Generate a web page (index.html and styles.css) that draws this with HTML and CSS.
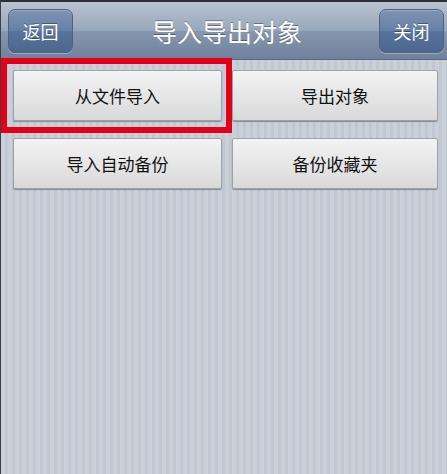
FILE: index.html
```html
<!DOCTYPE html>
<html lang="zh">
<head>
<meta charset="utf-8">
<link rel="stylesheet" href="styles.css">
</head>
<body>
<div class="screen">
  <header class="navbar">
    <button class="nav-btn">返回</button>
    <h1 class="title">导入导出对象</h1>
    <button class="nav-btn">关闭</button>
  </header>
  <main class="grid">
    <div class="cell highlighted"><button class="action">从文件导入</button></div>
    <div class="cell"><button class="action">导出对象</button></div>
    <div class="cell"><button class="action">导入自动备份</button></div>
    <div class="cell"><button class="action">备份收藏夹</button></div>
  </main>
</div>
</body>
</html>
```
FILE: styles.css
```css
html, body {
  margin: 0;
  padding: 0;
  width: 447px;
  height: 474px;
  overflow: hidden;
}
body {
  font-family: "Noto Sans CJK SC", "Noto Sans", sans-serif;
}
.screen {
  width: 447px;
  height: 474px;
  box-sizing: border-box;
  border-left: 1px solid #3c3f44;
  background: repeating-linear-gradient(90deg, #c9d0d8 0 4px, #c1c8d1 4px 7px);
  display: flex;
  flex-direction: column;
}
.navbar {
  height: 60px;
  flex: none;
  box-sizing: border-box;
  border-top: 2px solid #2d3036;
  border-bottom: 1px solid #5a6a82;
  background: linear-gradient(#b9c3d0 0%, #98a7bb 50%, #8797ae 51%, #6f819c 100%);
  display: flex;
  align-items: center;
  justify-content: space-between;
  padding: 0 3px 0 7px;
}
.nav-btn {
  width: 65px;
  height: 44px;
  margin-top: 1px;
  border: 1px solid #4d6284;
  border-radius: 7px;
  background: linear-gradient(#7d93b4 0%, #6680a5 50%, #57739c 51%, #4c6891 100%);
  box-shadow: inset 0 1px 0 rgba(255,255,255,0.25), 0 1px 0 rgba(255,255,255,0.3);
  color: #fff;
  font-family: inherit;
  font-size: 18px;
  padding: 0;
  text-shadow: 0 -1px 0 rgba(0,0,0,0.35);
}
.title {
  margin: 0;
  color: #fff;
  font-size: 25px;
  font-weight: normal;
  text-shadow: 0 -1px 0 rgba(0,0,0,0.35);
  padding-left: 2px;
}
.grid {
  display: grid;
  grid-template-columns: 209px 206px;
  grid-auto-rows: 51px;
  column-gap: 10px;
  row-gap: 17px;
  padding: 10px 0 0 12px;
}
.cell {
  position: relative;
  display: flex;
}
.cell.highlighted::after {
  content: "";
  position: absolute;
  left: -12px;
  right: -10px;
  top: -12px;
  bottom: -12px;
  border: 6px solid #e5001a;
  pointer-events: none;
}
.action {
  flex: 1;
  border: 1px solid #9da2a8;
  border-radius: 2px;
  background: linear-gradient(#f3f3f3 0%, #e6e6e6 50%, #d9d9d9 100%);
  box-shadow: 0 1px 1px rgba(60,60,60,0.45);
  color: #111;
  font-family: inherit;
  font-size: 17px;
  padding: 0;
}
```
